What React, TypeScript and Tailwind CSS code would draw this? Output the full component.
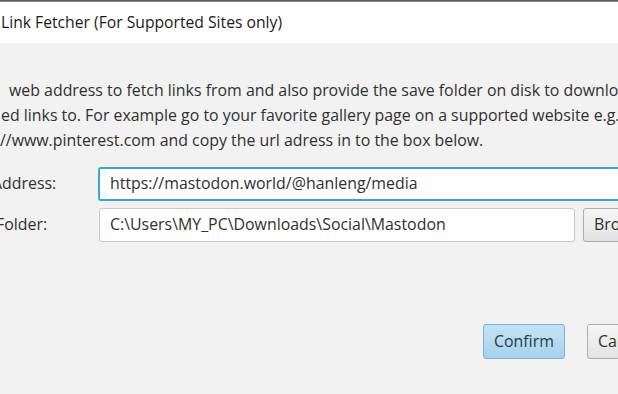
import React from "react";

const font = { fontFamily: '"Open Sans", "Noto Sans", sans-serif' };

export default function App() {
  return (
    <div
      className="w-[618px] h-[394px] overflow-hidden flex flex-col bg-[#f2f2f2] text-[#303030]"
      style={font}
    >
      {/* window border */}
      <div className="h-[1px] bg-[#5a5a5a]" />
      <div className="h-[1px] bg-[#8c8c8c]" />

      {/* title bar */}
      <div className="h-[41px] bg-white flex items-center pl-[1px] shrink-0">
        <span className="text-[15.7px] whitespace-nowrap text-[#1a1a1a]">
          Link Fetcher (For Supported Sites only)
        </span>
      </div>

      {/* body */}
      <div className="flex flex-col pt-[35px]">
        <div className="text-[15.9px] leading-[25px] whitespace-nowrap">
          <div className="pl-[9px]">
            web address to fetch links from and also provide the save folder on disk to download the
          </div>
          <div className="pl-[1px]">
            ed links to. For example go to your favorite gallery page on a supported website e.g.
          </div>
          <div>//www.pinterest.com and copy the url adress in to the box below.</div>
        </div>

        <div className="mt-[14px] flex items-center h-[34px]">
          <div className="w-[106px] ml-[-8px] text-[15.9px] shrink-0">Address:</div>
          <div className="flex-1 min-w-0 h-[34px] mr-[-20px] bg-white border-2 border-[#3aa3db] rounded-[3px] flex items-center pl-[10px] text-[15.9px] whitespace-nowrap">
            https://mastodon.world/@hanleng/media
          </div>
        </div>

        <div className="mt-[7px] flex items-center h-[34px]">
          <div className="w-[103px] ml-[-4px] text-[15.9px] shrink-0">Folder:</div>
          <div className="w-[476px] shrink-0 h-[34px] bg-white border border-[#c9c9c9] rounded-[3px] flex items-center pl-[10px] text-[15.9px] whitespace-nowrap">
            C:\Users\MY_PC\Downloads\Social\Mastodon
          </div>
          <button className="ml-[8px] shrink-0 h-[34px] w-[80px] border border-[#acacac] rounded-[3px] bg-gradient-to-b from-[#f6f6f6] to-[#e3e3e3] text-left pl-[10px] text-[15.9px] text-[#303030]">
            Browse
          </button>
        </div>

        <div className="mt-[82px] flex h-[35px]">
          <div className="w-[483px] shrink-0" />
          <button className="shrink-0 w-[82px] h-[35px] border border-[#7fb2cf] rounded-[3px] bg-gradient-to-b from-[#c4e3f5] to-[#a6d2ec] text-[15.9px] text-[#2b3945]">
            Confirm
          </button>
          <button className="ml-[22px] shrink-0 w-[82px] h-[35px] border border-[#acacac] rounded-[3px] bg-gradient-to-b from-[#f6f6f6] to-[#e3e3e3] text-left pl-[10px] text-[15.9px] text-[#303030]">
            Cancel
          </button>
        </div>
      </div>
    </div>
  );
}
